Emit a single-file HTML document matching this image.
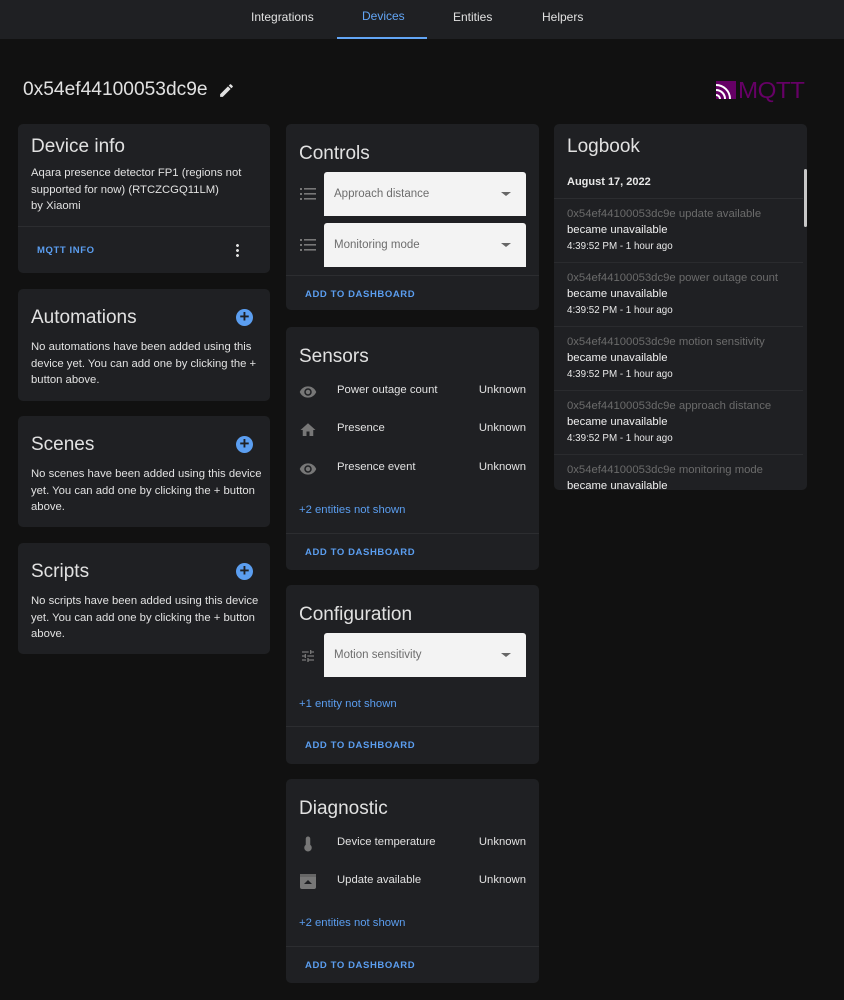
<!DOCTYPE html>
<html><head><meta charset="utf-8"><style>
*{box-sizing:border-box;margin:0;padding:0}
body{width:844px;height:1000px;background:#111111;font-family:"Liberation Sans",sans-serif;color:#e1e1e1;position:relative;overflow:hidden}
.a{position:absolute}
.hdr{left:0;top:0;width:844px;height:39px;background:#1f2023}
.tab{top:10px;font-size:12px;color:#e1e1e1}
.card{background:#1f2023;border-radius:5px;position:absolute}
.t{position:absolute;font-size:19px;color:#e1e1e1}
.p{position:absolute;font-size:11.3px;line-height:16.5px;color:#e1e1e1}
.btn{position:absolute;font-size:9.5px;font-weight:bold;letter-spacing:0.6px;color:#5b9ef0}
.div{position:absolute;left:0;right:0;height:1px;background:#2c2d30}
.plus{position:absolute;width:17px;height:17px;border-radius:50%;background:#5b9ef0;color:#1f2023;font-size:17px;line-height:16px;text-align:center;font-weight:bold}
.sel{position:absolute;left:38px;width:202px;height:44px;background:#f3f3f3;border-radius:3px 3px 0 0;font-size:11.5px;color:#6d6d6d;padding:16px 0 0 10px}
.sel:after{content:"";position:absolute;right:15px;top:20px;border:4px solid transparent;border-top-color:#666;border-bottom:0;border-left-width:5px;border-right-width:5px}
.row{position:absolute;left:0;right:0;font-size:11.3px}
.row .n{position:absolute;left:51px}
.row .v{position:absolute;right:13px}
.lnk{position:absolute;font-size:11.3px;color:#5b9ef0}
.lg{position:absolute;left:0;right:0;height:64px;border-bottom:1px solid #2a2b2e}
.lg .e{position:absolute;left:13px;top:9px;font-size:11.3px;color:#6b6b6b}
.lg .s{position:absolute;left:13px;top:25px;font-size:11.3px;color:#f0f0f0}
.lg .d{position:absolute;left:13px;top:42px;font-size:9.8px;color:#e8e8e8}
</style></head><body>
<div class="a hdr"></div>
<div class="a tab" style="left:251px">Integrations</div>
<div class="a tab" style="left:362px;top:9px;color:#62a5f5">Devices</div>
<div class="a tab" style="left:453px">Entities</div>
<div class="a tab" style="left:542px">Helpers</div>
<div class="a" style="left:337px;top:37px;width:90px;height:2px;background:#62a5f5"></div>

<div class="a" style="left:23px;top:79px;font-size:19.2px;color:#e1e1e1">0x54ef44100053dc9e</div>
<svg class="a" style="left:218px;top:82px" width="17" height="17" viewBox="0 0 24 24"><path fill="#e1e1e1" d="M3 17.25V21h3.75L17.81 9.94l-3.75-3.75L3 17.25zM20.71 7.04a1 1 0 0 0 0-1.41l-2.34-2.34a1 1 0 0 0-1.41 0l-1.83 1.83 3.75 3.75 1.83-1.83z"/></svg>
<svg class="a" style="left:716px;top:81px" width="20" height="18" viewBox="0 0 20 18"><rect width="20" height="18" fill="#660066"/><path d="M0 4a14 14 0 0 1 14 14M0 9a9 9 0 0 1 9 9M0 14a4 4 0 0 1 4 4" stroke="#fff" stroke-width="2" fill="none"/></svg>
<div class="a" style="left:738px;top:77px;font-size:23px;color:#660066;letter-spacing:-0.5px;transform:scaleX(1.05);transform-origin:left">MQTT</div>

<!-- left column -->
<div class="card" style="left:18px;top:124px;width:252px;height:149px">
 <div class="t" style="left:13px;top:12px">Device info</div>
 <div class="p" style="left:13px;top:41px">Aqara presence detector FP1 (regions not supported for now) (RTCZCGQ11LM)<br>by Xiaomi</div>
 <div class="div" style="top:102px"></div>
 <div class="btn" style="left:19px;top:121px">MQTT INFO</div>
 <div class="a" style="left:218px;top:119px;width:3px;height:14px;background:radial-gradient(circle,#ddd 1.3px,transparent 1.6px) 0 0/3px 5px"></div>
</div>
<div class="card" style="left:18px;top:289px;width:252px;height:112px">
 <div class="t" style="left:13px;top:18px">Automations</div>
 <div class="plus" style="left:218px;top:20px">+</div>
 <div class="p" style="left:13px;top:50px;width:232px">No automations have been added using this device yet. You can add one by clicking the + button above.</div>
</div>
<div class="card" style="left:18px;top:416px;width:252px;height:111px">
 <div class="t" style="left:13px;top:18px">Scenes</div>
 <div class="plus" style="left:218px;top:20px">+</div>
 <div class="p" style="left:13px;top:50px;width:232px">No scenes have been added using this device yet. You can add one by clicking the + button above.</div>
</div>
<div class="card" style="left:18px;top:543px;width:252px;height:111px">
 <div class="t" style="left:13px;top:18px">Scripts</div>
 <div class="plus" style="left:218px;top:20px">+</div>
 <div class="p" style="left:13px;top:50px;width:232px">No scripts have been added using this device yet. You can add one by clicking the + button above.</div>
</div>

<!-- middle column -->
<div class="card" style="left:286px;top:124px;width:253px;height:186px">
 <div class="t" style="left:13px;top:19px">Controls</div>
 <svg class="a" style="left:14px;top:63px" width="16" height="14" viewBox="0 0 16 14"><g fill="#777"><rect x="0" y="1" width="2" height="2"/><rect x="0" y="6" width="2" height="2"/><rect x="0" y="11" width="2" height="2"/><rect x="4" y="1" width="12" height="1.6"/><rect x="4" y="6" width="12" height="1.6"/><rect x="4" y="11" width="12" height="1.6"/></g></svg>
 <div class="sel" style="top:48px">Approach distance</div>
 <svg class="a" style="left:14px;top:114px" width="16" height="14" viewBox="0 0 16 14"><g fill="#777"><rect x="0" y="1" width="2" height="2"/><rect x="0" y="6" width="2" height="2"/><rect x="0" y="11" width="2" height="2"/><rect x="4" y="1" width="12" height="1.6"/><rect x="4" y="6" width="12" height="1.6"/><rect x="4" y="11" width="12" height="1.6"/></g></svg>
 <div class="sel" style="top:99px">Monitoring mode</div>
 <div class="div" style="top:151px"></div>
 <div class="btn" style="left:19px;top:165px">ADD TO DASHBOARD</div>
</div>
<div class="card" style="left:286px;top:327px;width:253px;height:243px">
 <div class="t" style="left:13px;top:19px">Sensors</div>
 <div class="row" style="top:57px"><svg class="a" style="left:13px;top:-1px" width="18" height="18" viewBox="0 0 24 24"><path fill="#777" d="M12 9a3 3 0 1 0 0 6 3 3 0 0 0 0-6m0 8a5 5 0 1 1 0-10 5 5 0 0 1 0 10m0-12.5C7 4.5 2.73 7.61 1 12c1.73 4.39 6 7.5 11 7.5s9.27-3.11 11-7.5c-1.73-4.39-6-7.5-11-7.5z"/></svg><span class="n">Power outage count</span><span class="v">Unknown</span></div>
 <div class="row" style="top:95px"><svg class="a" style="left:13px;top:-1px" width="18" height="18" viewBox="0 0 24 24"><path fill="#777" d="M10 20v-6h4v6h5v-8h3L12 3 2 12h3v8z"/></svg><span class="n">Presence</span><span class="v">Unknown</span></div>
 <div class="row" style="top:134px"><svg class="a" style="left:13px;top:-1px" width="18" height="18" viewBox="0 0 24 24"><path fill="#777" d="M12 9a3 3 0 1 0 0 6 3 3 0 0 0 0-6m0 8a5 5 0 1 1 0-10 5 5 0 0 1 0 10m0-12.5C7 4.5 2.73 7.61 1 12c1.73 4.39 6 7.5 11 7.5s9.27-3.11 11-7.5c-1.73-4.39-6-7.5-11-7.5z"/></svg><span class="n">Presence event</span><span class="v">Unknown</span></div>
 <div class="lnk" style="left:13px;top:177px">+2 entities not shown</div>
 <div class="div" style="top:206px"></div>
 <div class="btn" style="left:19px;top:220px">ADD TO DASHBOARD</div>
</div>
<div class="card" style="left:286px;top:585px;width:253px;height:179px">
 <div class="t" style="left:13px;top:19px">Configuration</div>
 <svg class="a" style="left:14px;top:63px" width="16" height="16" viewBox="0 0 24 24"><path fill="#777" d="M3 17v2h6v-2H3M3 5v2h10V5H3m10 16v-2h8v-2h-8v-2h-2v6h2M7 9v2H3v2h4v2h2V9H7m14 4v-2H11v2h10m-6-4h2V7h4V5h-4V3h-2v6z"/></svg>
 <div class="sel" style="top:48px">Motion sensitivity</div>
 <div class="lnk" style="left:13px;top:113px">+1 entity not shown</div>
 <div class="div" style="top:141px"></div>
 <div class="btn" style="left:19px;top:155px">ADD TO DASHBOARD</div>
</div>
<div class="card" style="left:286px;top:779px;width:253px;height:204px">
 <div class="t" style="left:13px;top:19px">Diagnostic</div>
 <div class="row" style="top:57px"><svg class="a" style="left:13px;top:-2px" width="18" height="20" viewBox="0 0 24 24"><path fill="#777" d="M15 13V5a3 3 0 0 0-6 0v8a5 5 0 1 0 6 0z"/></svg><span class="n">Device temperature</span><span class="v">Unknown</span></div>
 <div class="row" style="top:95px"><svg class="a" style="left:14px;top:-1px" width="16" height="17" viewBox="0 0 16 17"><rect x="0" y="1" width="16" height="15" rx="2" fill="#777"/><rect x="0" y="1" width="16" height="3" fill="#666"/><path d="M8 7l-4 4h8z" fill="#1f2023"/></svg><span class="n">Update available</span><span class="v">Unknown</span></div>
 <div class="lnk" style="left:13px;top:138px">+2 entities not shown</div>
 <div class="div" style="top:167px"></div>
 <div class="btn" style="left:19px;top:181px">ADD TO DASHBOARD</div>
</div>

<!-- logbook -->
<div class="card" style="left:554px;top:124px;width:253px;height:366px;overflow:hidden">
 <div class="t" style="left:13px;top:12px">Logbook</div>
 <div class="a" style="left:13px;top:52px;font-size:11px;font-weight:bold;color:#e8e8e8">August 17, 2022</div>
 <div class="a" style="left:250px;top:45px;width:3px;height:58px;background:#c8c8c8;border-radius:2px"></div>
 <div class="div" style="top:74px;right:4px"></div>
 <div class="lg" style="top:75px;right:4px"><span class="e">0x54ef44100053dc9e update available</span><span class="s">became unavailable</span><span class="d">4:39:52 PM - 1 hour ago</span></div>
 <div class="lg" style="top:139px;right:4px"><span class="e">0x54ef44100053dc9e power outage count</span><span class="s">became unavailable</span><span class="d">4:39:52 PM - 1 hour ago</span></div>
 <div class="lg" style="top:203px;right:4px"><span class="e">0x54ef44100053dc9e motion sensitivity</span><span class="s">became unavailable</span><span class="d">4:39:52 PM - 1 hour ago</span></div>
 <div class="lg" style="top:267px;right:4px"><span class="e">0x54ef44100053dc9e approach distance</span><span class="s">became unavailable</span><span class="d">4:39:52 PM - 1 hour ago</span></div>
 <div class="lg" style="top:331px;right:4px;border:0"><span class="e">0x54ef44100053dc9e monitoring mode</span><span class="s">became unavailable</span></div>
</div>
</body></html>
